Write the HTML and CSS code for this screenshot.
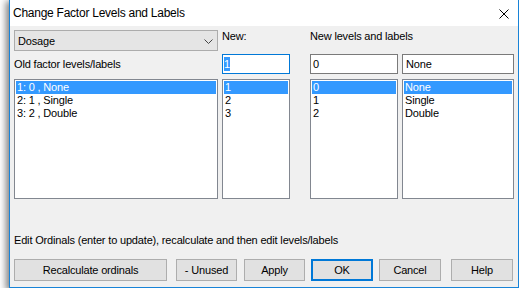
FILE: index.html
```html
<!DOCTYPE html>
<html>
	<head>
		<meta http-equiv="Content-Type" content="text/html; charset=UTF-8" />
		<title>Change Factor Levels and Labels</title>
		<link rel="stylesheet" href="styles.css">
	</head>
	<body>
		<div class="window">
			<div class="title-bar">
				<span class="title-txt">Change Factor Levels and Labels</span>
				<svg class="close-btn" width="10" height="10" viewBox="0 0 10 10">
					<path d="M0.5 0.5 L9.5 9.5 M9.5 0.5 L0.5 9.5" stroke="#000" stroke-width="1" fill="none"/>
				</svg>
			</div>
			<div class="client">
				<div class="fields">
					<div class="combo">
						<span>Dosage</span>
						<svg class="chevron" width="9" height="5" viewBox="0 0 9 5">
							<path d="M0.5 0.5 L4.5 4.5 L8.5 0.5" stroke="#444" stroke-width="1" fill="none"/>
						</svg>
					</div>
					<span class="lbl lbl-new">New:</span>
					<span class="lbl lbl-levels">New levels and labels</span>
					<span class="lbl lbl-old">Old factor levels/labels</span>
					<div class="edit edit-new focused"><span class="sel">1</span></div>
					<div class="edit edit-level">0</div>
					<div class="edit edit-label">None</div>
					<div class="list list-old">
						<div class="item sel">1: 0 , None</div>
						<div class="item">2: 1 , Single</div>
						<div class="item">3: 2 , Double</div>
					</div>
					<div class="list list-new">
						<div class="item sel">1</div>
						<div class="item">2</div>
						<div class="item">3</div>
					</div>
					<div class="list list-level">
						<div class="item sel">0</div>
						<div class="item">1</div>
						<div class="item">2</div>
					</div>
					<div class="list list-label">
						<div class="item sel">None</div>
						<div class="item">Single</div>
						<div class="item">Double</div>
					</div>
				</div>
				<p class="status">Edit Ordinals (enter to update), recalculate and then edit levels/labels</p>
				<div class="buttons">
					<button class="btn btn-recalc">Recalculate ordinals</button>
					<button class="btn btn-unused">- Unused</button>
					<button class="btn btn-apply">Apply</button>
					<button class="btn btn-ok">OK</button>
					<button class="btn btn-cancel">Cancel</button>
					<button class="btn btn-help">Help</button>
				</div>
			</div>
		</div>
	</body>
</html>
```

FILE: styles.css
```css
body {
	margin: 0;
	background-color: white;
	font: 11px "Liberation Sans", Arial, sans-serif;
	letter-spacing: -0.17px;
	color: #000;
}
.window {
	margin-left: 9px;
	width: 510px;
	height: 288px;
	box-sizing: border-box;
	border: 1px solid #1883d7;
	border-top: 0;
	background-color: #f0f0f0;
	box-shadow: -2px 2px 7px 1px rgba(0, 0, 0, 0.5);
	overflow: hidden;
}
.title-bar {
	height: 26px;
	background-color: white;
	display: flex;
	align-items: center;
	justify-content: space-between;
	padding: 0 9px 0 3px;
}
.title-txt {
	font: 12px "Liberation Sans", Arial, sans-serif;
	letter-spacing: -0.25px;
}
.close-btn { margin-top: 1px; }

.client { padding: 4px 4px 0 4px; }

.fields {
	display: grid;
	grid-template-columns: 204px 68px 12px 88px 112px;
	grid-template-rows: 21px 3px 20px 5px 120px;
	column-gap: 4px;
	grid-template-areas:
		"combo  lnew  .  llev   llev"
		".      .     .  .      ."
		"lold   enew  .  elev   elab"
		".      .     .  .      ."
		"old    new   .  lev    lab";
}
.combo {
	grid-area: combo;
	display: flex;
	align-items: center;
	justify-content: space-between;
	padding: 0 4px 0 3px;
	border: 1px solid #acacac;
	background-color: #e5e5e5;
}
.chevron { margin-top: 1px; }

.lbl { line-height: 13px; }
.lbl-new    { grid-area: lnew; }
.lbl-levels { grid-area: llev; }
.lbl-old    { grid-area: lold; align-self: center; }

.edit {
	border: 1px solid #7a7a7a;
	background-color: white;
	padding: 0 2px;
	line-height: 18px;
}
.edit.focused { border-color: #0078d7; padding-left: 1px; }
.edit-new   { grid-area: enew; }
.edit-level { grid-area: elev; }
.edit-label { grid-area: elab; padding-left: 3px; }
.edit .sel {
	background-color: #3399ff;
	color: white;
	padding: 1px 0;
}

.list {
	border: 1px solid #828790;
	background-color: white;
	padding: 1px;
}
.list-old   { grid-area: old; }
.list-new   { grid-area: new; }
.list-level { grid-area: lev; }
.list-label { grid-area: lab; }
.item {
	line-height: 13px;
	padding-left: 1px;
	white-space: pre;
}
.item.sel {
	background-color: #3399ff;
	color: white;
}

.status {
	margin: 35px 0 0;
	line-height: 13px;
}

.buttons {
	display: flex;
	margin-top: 12px;
}
.btn {
	height: 22px;
	padding: 0;
	border: 1px solid #adadad;
	background-color: #e1e1e1;
	font: 11px "Liberation Sans", Arial, sans-serif;
	letter-spacing: -0.17px;
	color: #000;
}
.btn-recalc { width: 153px; }
.btn-unused { width: 61px; margin-left: 9px; }
.btn-apply  { width: 61px; margin-left: 7px; }
.btn-ok     { width: 62px; margin-left: 6px; border: 2px solid #0078d7; }
.btn-cancel { width: 62px; margin-left: 6px; }
.btn-help   { width: 62px; margin-left: 10px; }
```
